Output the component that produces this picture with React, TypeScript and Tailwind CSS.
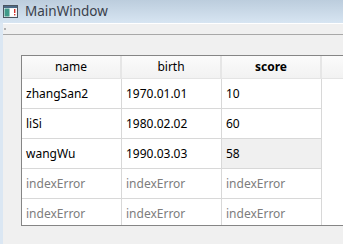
import React from 'react';

const rows: { cells: string[]; error?: boolean }[] = [
  { cells: ['zhangSan2', '1970.01.01', '10'] },
  { cells: ['liSi', '1980.02.02', '60'] },
  { cells: ['wangWu', '1990.03.03', '58'] },
  { cells: ['indexError', 'indexError', 'indexError'], error: true },
  { cells: ['indexError', 'indexError', 'indexError'], error: true },
];

const headers = ['name', 'birth', 'score'];

const WinIcon = () => (
  <svg width="15" height="13" viewBox="0 0 15 13">
    <rect x="0.5" y="0.5" width="14" height="12" fill="#f4f6f8" stroke="#4a5560" />
    <rect x="1" y="1" width="13" height="2" fill="#4c6a86" />
    <rect x="1.5" y="3.5" width="5" height="8" fill="#3f9a8a" />
    <rect x="7" y="4" width="6" height="7" fill="#ffffff" />
    <rect x="11" y="4" width="1.4" height="4" fill="#d0302a" />
    <rect x="11" y="9" width="1.4" height="1.4" fill="#d0302a" />
  </svg>
);

export default function App() {
  return (
    <div className="w-[343px] h-[244px] overflow-hidden flex flex-col bg-[#f0f0f0] font-['Noto_Sans',sans-serif]">
      <div className="h-[23px] shrink-0 flex items-center gap-[7px] pl-[3px] bg-gradient-to-b from-[#bccddd] to-[#d7e5f2]">
        <WinIcon />
        <span className="text-[13.5px] text-[#3a414c] leading-none">MainWindow</span>
      </div>
      <div className="flex-1 flex min-h-0">
        <div className="w-[3px] shrink-0 bg-[#dbe7f3]" />
        <div className="flex-1 flex flex-col min-w-0">
          <div className="h-[11px] shrink-0 border-t border-white flex items-center pl-[1px]">
            <div className="w-[2px] h-[2px] bg-[#b0b0b0]" />
          </div>
          <div className="h-px shrink-0 bg-[#a8a8a8]" />
          <div className="pt-[20px] pl-[18px]">
            <div className="h-[171px] bg-white border-t border-l border-b border-[#858585] overflow-hidden">
              <div className="flex h-[23px] bg-gradient-to-b from-[#fbfbfb] to-[#f2f2f2] border-b border-[#e4e4e4]">
                {headers.map((h, i) => (
                  <div
                    key={h}
                    className={`w-[100px] shrink-0 flex items-center justify-center border-r-2 border-[#e6e6e6] text-[12px] text-black ${i === 2 ? 'font-bold' : ''}`}
                  >
                    {h}
                  </div>
                ))}
                <div className="flex-1" />
              </div>
              {rows.map((r, ri) => (
                <div key={ri} className="flex h-[30px]">
                  {r.cells.map((c, ci) => (
                    <div
                      key={ci}
                      className={`w-[100px] shrink-0 flex items-center pl-[4px] border-r border-b border-[#d8d8d8] text-[12px] ${r.error ? 'text-[#7d7d7d]' : 'text-black'} ${ri === 2 && ci === 2 ? 'bg-[#f0f0f0]' : ''}`}
                    >
                      {c}
                    </div>
                  ))}
                </div>
              ))}
            </div>
          </div>
        </div>
      </div>
    </div>
  );
}
